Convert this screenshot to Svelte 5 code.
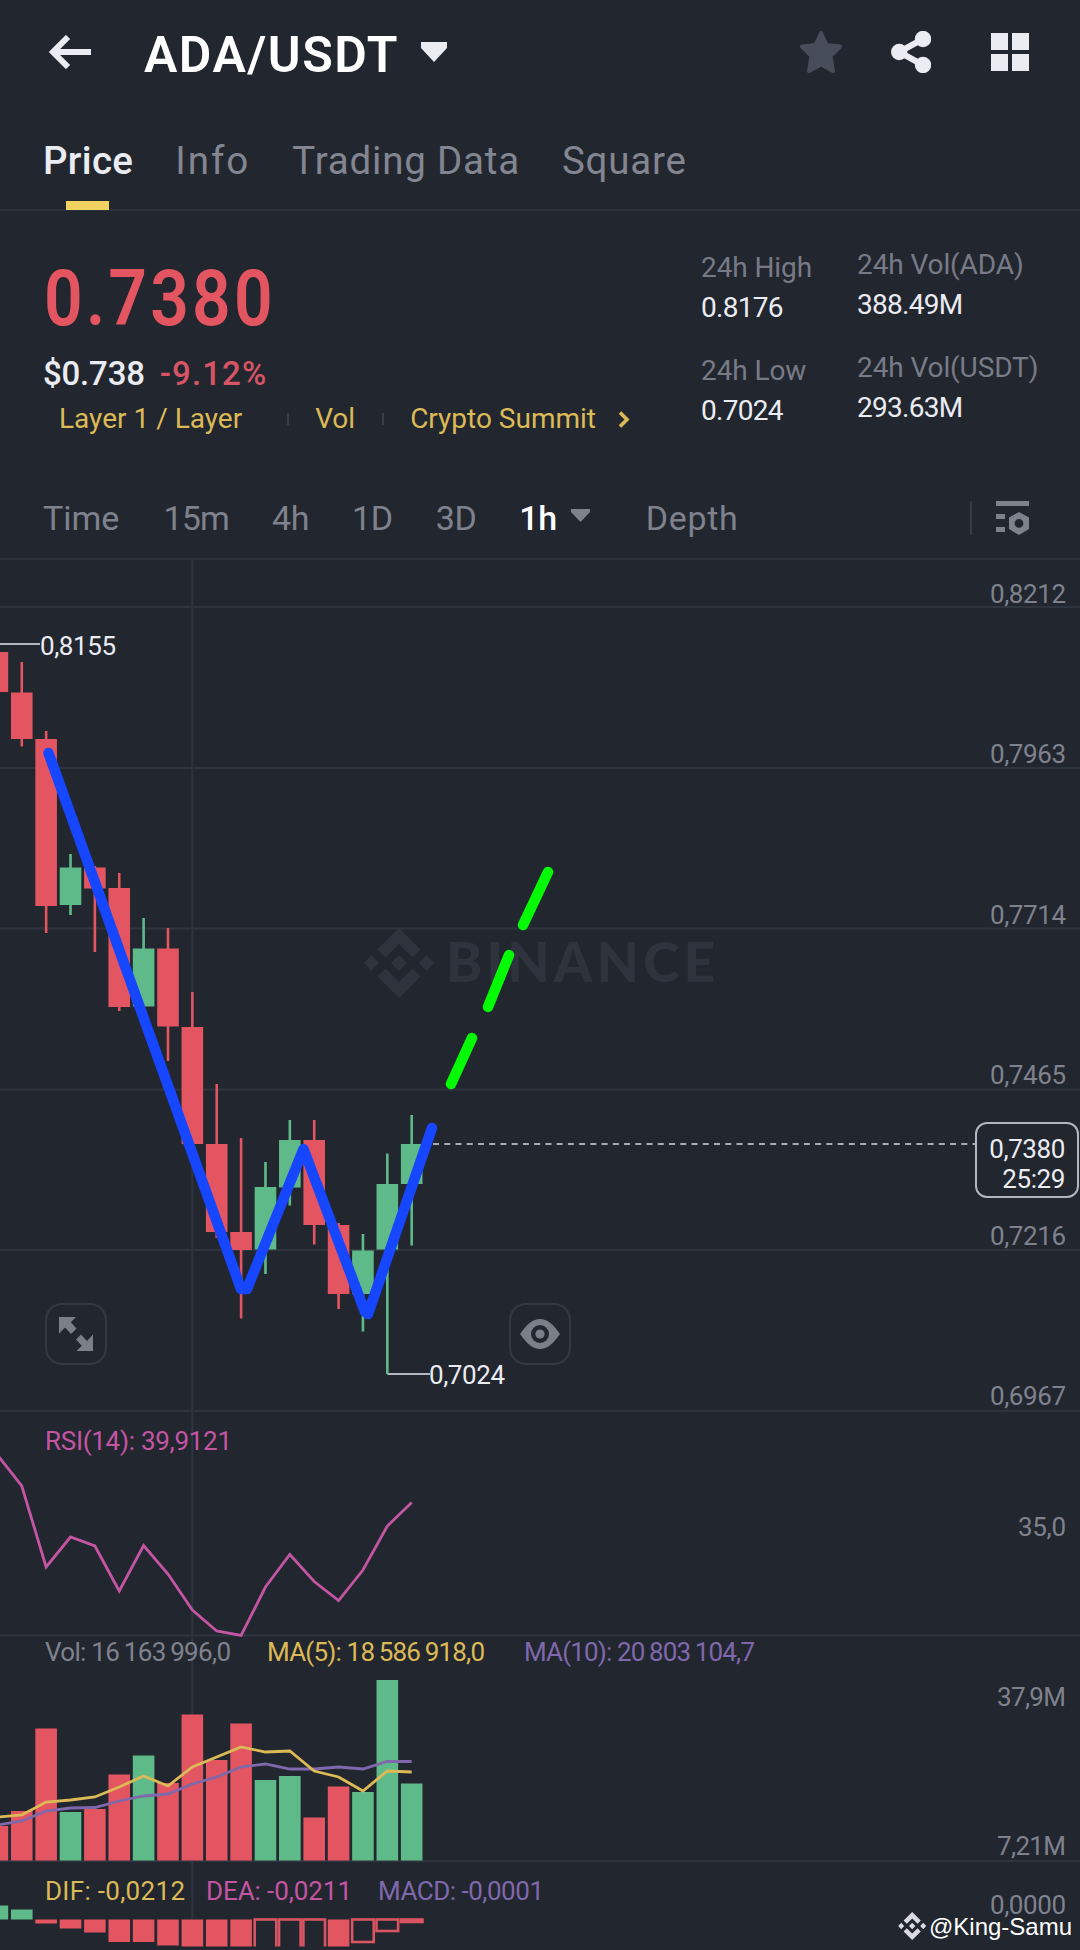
<script>
    const tabs = ["Price", "Info", "Trading Data", "Square"]
    const intervals = ["Time", "15m", "4h", "1D", "3D"]

    const step = 24.37
    const x = (i) => -2.6 + i * step

    // up?, high, body top, body bottom, low
    const candles = [
        [0, 652, 652, 692, 692],
        [0, 662, 692.5, 739, 746.5],
        [0, 731, 739, 906, 933],
        [1, 854, 867.5, 905, 915],
        [0, 866, 867.5, 888.5, 952],
        [0, 873, 888, 1007, 1011],
        [1, 918, 948.5, 1006.5, 1006.5],
        [0, 928, 948.5, 1026.5, 1061],
        [0, 992, 1027, 1144, 1144],
        [0, 1084, 1144, 1232, 1238],
        [0, 1138, 1232, 1250, 1318.5],
        [1, 1162, 1187, 1249.5, 1274],
        [1, 1120, 1140, 1187.5, 1205.5],
        [0, 1120, 1140, 1225, 1244.5],
        [0, 1223, 1225, 1294, 1309],
        [1, 1234, 1250.5, 1294, 1331.5],
        [1, 1153.5, 1184, 1249.5, 1374],
        [1, 1115, 1144, 1184, 1245.5]
    ]

    const volumes = [1826, 1811, 1728.5, 1812, 1809, 1774.5, 1755.5, 1783, 1714.5, 1760, 1723.5, 1780, 1776, 1817.5, 1786.5, 1792, 1680, 1783.5]
    const ma5 = [1817, 1815, 1802, 1800, 1797, 1787, 1776, 1786, 1767, 1757, 1747, 1752, 1751, 1771, 1777, 1791, 1771, 1772]
    const ma10 = [1825, 1821, 1811, 1808, 1807.5, 1801, 1796, 1794, 1784, 1777, 1767, 1764, 1769, 1769, 1767, 1769, 1761.5, 1761.5]
    const rsi = [1455, 1486, 1567, 1537, 1546, 1591, 1545.5, 1574, 1610, 1631, 1635.5, 1587, 1554.5, 1581.5, 1600.5, 1570, 1526, 1502.5]

    // top, bottom, style
    const macd = [
        [1905.5, 1919.5, "up"],
        [1909.5, 1919.5, "up"],
        [1919.5, 1923.5, "down"],
        [1919.5, 1928.5, "down"],
        [1919.5, 1932.5, "down"],
        [1919.5, 1942, "down"],
        [1919.5, 1942, "down"],
        [1919.5, 1945.5, "down"],
        [1919.5, 1947, "down"],
        [1919.5, 1947, "down"],
        [1919.5, 1947, "down"],
        [1919.5, 1955, "hollow"],
        [1919.5, 1955, "hollow"],
        [1919.5, 1955, "hollow"],
        [1919.5, 1947, "down"],
        [1919.5, 1942, "hollow"],
        [1919.5, 1931, "hollow"],
        [1919.5, 1922, "hollow"]
    ]

    const gridLines = [607, 768, 928.5, 1089.5, 1250, 1411, 1635.5, 1861]

    const axis = [
        ["0,8212", 602.5, 76],
        ["0,7963", 763, 76],
        ["0,7714", 923.5, 76],
        ["0,7465", 1083.5, 76],
        ["0,7216", 1244.5, 76],
        ["0,6967", 1405, 76],
        ["35,0", 1536, 48],
        ["37,9M", 1706, 69],
        ["7,21M", 1855, 69],
        ["0,0000", 1914, 76]
    ]

    const legend = [
        ["RSI(14): 39,9121", 45, 1450, 187, "pink"],
        ["Vol: 16\u2009163\u2009996,0", 45, 1661, 186, "grey"],
        ["MA(5): 18\u2009586\u2009918,0", 267, 1661, 218, "yellow"],
        ["MA(10): 20\u2009803\u2009104,7", 524, 1661, 231, "purple"],
        ["DIF: -0,0212", 45, 1899.5, 140, "yellow"],
        ["DEA: -0,0211", 206, 1899.5, 146, "pink"],
        ["MACD: -0,0001", 378, 1899.5, 166, "purple"]
    ]

    const line = (ys) => ys.map((y, i) => x(i) + "," + y).join(" ")
</script>

{#snippet logo()}
    <path d="M0 -35 L21.5 -13.5 L13.5 -5.5 L0 -19 L-13.5 -5.5 L-21.5 -13.5 Z" />
    <path d="M0 35 L21.5 13.5 L13.5 5.5 L0 19 L-13.5 5.5 L-21.5 13.5 Z" />
    <path d="M0 -8 L8 0 L0 8 L-8 0 Z M-27.5 -8 L-20 0 L-27.5 8 L-35 0 Z M27.5 -8 L35 0 L27.5 8 L20 0 Z" />
{/snippet}

<main>
    <header>
        <svg class="back" width="42" height="34" viewBox="0 0 42 34">
            <path d="M42 17 H5 M19 2 L4 17 L19 32" />
        </svg>
        <h1>ADA/USDT</h1>
        <svg class="caret" width="26" height="20" viewBox="0 0 26 20">
            <path d="M0 0 H26 V6 L13 20 L0 6 Z" />
        </svg>
        <div class="actions">
            <svg width="42" height="42" viewBox="0 0 42 42">
                <path class="star" d="M21 2 L26.5 14 L40 15.5 L30.5 25 L33 40 L21 33.5 L9 40 L11.5 25 L2 15.5 L15.5 14 Z" />
            </svg>
            <svg width="40" height="42" viewBox="0 0 40 42">
                <path class="link" d="M32 8 L8 21 L32 34" />
                <circle cx="32" cy="8" r="8.2" />
                <circle cx="8.2" cy="21" r="8.2" />
                <circle cx="32" cy="34" r="8.2" />
            </svg>
            <svg width="38" height="38" viewBox="0 0 38 38">
                <path d="M0 0 H17 V17 H0 Z M21 0 H38 V17 H21 Z M0 21 H17 V38 H0 Z M21 21 H38 V38 H21 Z" />
            </svg>
        </div>
    </header>

    <nav>
        {#each tabs as tab, i}
            <span class="tab" class:active={i === 0}>{tab}</span>
        {/each}
    </nav>

    <section class="summary">
        <div class="quote">
            <div class="last">0.7380</div>
            <div class="fiat"><b>$0.738</b><span>-9.12%</span></div>
            <div class="tags">
                <span class="layer">Layer 1 / Layer</span>
                <i></i>
                <span class="vol">Vol</span>
                <i></i>
                <span class="summit">Crypto Summit</span>
                <svg width="12" height="17" viewBox="0 0 12 17"><path d="M2 1.5 L9 8.5 L2 15.5" /></svg>
            </div>
        </div>
        <dl class="prices">
            <dt>24h High</dt>
            <dd>0.8176</dd>
            <dt>24h Low</dt>
            <dd>0.7024</dd>
        </dl>
        <dl class="volumes">
            <dt>24h Vol(ADA)</dt>
            <dd>388.49M</dd>
            <dt>24h Vol(USDT)</dt>
            <dd>293.63M</dd>
        </dl>
    </section>

    <div class="intervals">
        {#each intervals as interval}
            <span>{interval}</span>
        {/each}
        <span class="selected">1h</span>
        <svg class="drop" width="19" height="13" viewBox="0 0 19 13"><path d="M0 0 H19 V3 L9.5 13 L0 3 Z" /></svg>
        <span class="depth">Depth</span>
        <svg class="settings" width="34" height="34" viewBox="0 0 34 34">
            <path d="M0 0 H33 V5 H0 Z M0 13 H9 V18 H0 Z M0 26 H9 V31 H0 Z" />
            <path fill-rule="evenodd" d="M23 11 L33 16.5 V28 L23 34 L13 28 V16.5 Z M23 18 A4.4 4.4 0 1 0 23 26.8 A4.4 4.4 0 1 0 23 18 Z" />
        </svg>
    </div>

    <section class="chart">
        <svg class="plot" width="1080" height="1390" viewBox="0 560 1080 1390">
            <g class="grid">
                {#each gridLines as y}
                    <line x1="0" y1={y} x2="1080" y2={y} />
                {/each}
                <line x1="192.3" y1="560" x2="192.3" y2="1919" />
            </g>

            <g class="watermark">
                <g transform="translate(399 963)">{@render logo()}</g>
                <text x="446" y="982" textLength="269">BINANCE</text>
            </g>

            {#each candles as [up, high, top, bottom, low], i}
                <g class={up ? "up" : "down"}>
                    <rect x={x(i) - 1.3} y={high} width="2.6" height={low - high} />
                    <rect x={x(i) - 10.8} y={top} width="21.6" height={bottom - top} />
                </g>
            {/each}

            <path class="leader" d="M0 644 H40 M387.5 1374 H430" />
            <text class="mark" x="40" y="654.5" textLength="76">0,8155</text>
            <text class="mark" x="429" y="1384" textLength="76">0,7024</text>
            <line class="current" x1="433" y1="1144" x2="975" y2="1144" />

            <polyline class="trend" points="48.5,753 241,1289 247,1289 303.5,1149 365,1312 368,1314 432,1128" />
            <path class="forecast" d="M451 1084 L472 1038 M488 1007 L509 955 M523 925 L548 872" />

            <polyline class="line pink" points={line(rsi)} />

            {#each volumes as top, i}
                <rect class={candles[i][0] ? "up" : "down"} x={x(i) - 10.8} y={top} width="21.6" height={1860.5 - top} />
            {/each}
            <polyline class="line purple" points={line(ma10)} />
            <polyline class="line yellow" points={line(ma5)} />

            <clipPath id="macd-area"><rect x="0" y="1862" width="1080" height="84.5" /></clipPath>
            <g clip-path="url(#macd-area)">
                {#each macd as [top, bottom, kind], i}
                    <rect class={kind} x={x(i) - 10.8} y={top} width="21.6" height={bottom - top} />
                {/each}
            </g>

            {#each axis as [label, y, width]}
                <text class="axis" x={1066 - width} {y} textLength={width}>{label}</text>
            {/each}
            {#each legend as [label, left, y, width, color]}
                <text class="legend {color}" x={left} {y} textLength={width}>{label}</text>
            {/each}

            <g class="author">
                <g transform="translate(912.2 1926) scale(0.4)">{@render logo()}</g>
                <text x="929" y="1935" textLength="143">@King-Samu</text>
            </g>
        </svg>

        <div class="price-tag"><span>0,7380</span><span class="timer">25:29</span></div>

        <button class="expand" aria-label="Expand">
            <svg width="36" height="36" viewBox="0 0 36 36">
                <path d="M1 1 H18 L12.8 6.2 L18.5 12.5 L13 18 L7 11.5 L1 17.5 Z" />
                <path d="M35 35 H18.5 L23.8 29.8 L18 23.5 L23 18.5 L29 25 L35 18.5 Z" />
            </svg>
        </button>
        <button class="eye" aria-label="Show orders">
            <svg width="40" height="32" viewBox="0 0 40 32">
                <path d="M0 16 C7 6 13 1 20 1 S33 6 40 16 C33 26 27 31 20 31 S7 26 0 16 Z" />
                <circle class="iris" cx="20" cy="16" r="9" />
                <circle cx="20" cy="16" r="4.6" />
            </svg>
        </button>
    </section>
</main>

<style>
    :global(body) {
        background: #22262f;
    }

    main {
        width: 1080px;
        height: 1950px;
        overflow: hidden;
        background: #22262f;
        color: #ebecf2;
        font-family: Roboto, "Noto Sans", sans-serif;
    }

    svg {
        display: block;
        flex: none;
    }

    header {
        display: flex;
        align-items: center;
        height: 104px;
        padding: 0 51px 0 49px;
        box-sizing: border-box;
        fill: #ebecf2;
    }

    .back {
        fill: none;
        stroke: #ebecf2;
        stroke-width: 6;
    }

    h1 {
        margin: 6px 0 0 53px;
        font-size: 50px;
        line-height: 60px;
        font-weight: 600;
        letter-spacing: 1.5px;
        color: #fff;
    }

    .caret {
        margin-left: 22px;
    }

    .actions {
        display: flex;
        align-items: center;
        margin-left: auto;
    }

    .actions svg:nth-child(2) {
        margin: 0 60px 0 49px;
    }

    .star {
        fill: #474d59;
        stroke: #474d59;
        stroke-width: 4;
        stroke-linejoin: round;
    }

    .link {
        fill: none;
        stroke: #ebecf2;
        stroke-width: 6;
    }

    nav {
        display: flex;
        gap: 42px;
        height: 107px;
        padding: 35px 43px 0;
        box-sizing: border-box;
        border-bottom: 2px solid #2b313b;
    }

    .tab {
        position: relative;
        height: 70px;
        font-size: 38.5px;
        line-height: 44px;
        letter-spacing: 0.8px;
        color: #838691;
    }

    .tab:nth-child(2) {
        letter-spacing: 2px;
    }

    .tab.active {
        color: #ebecf2;
        font-weight: 500;
        letter-spacing: 0.3px;
    }

    .active::after {
        content: "";
        position: absolute;
        left: 23px;
        bottom: -1px;
        width: 43px;
        height: 9px;
        background: #f2d362;
    }

    .summary {
        display: flex;
        height: 266px;
        box-sizing: border-box;
    }

    .quote {
        width: 658px;
        padding: 43px 0 0 43px;
    }

    .last {
        width: 300px;
        margin-left: 1px;
        font-size: 77px;
        line-height: 90px;
        font-weight: 600;
        letter-spacing: 3.6px;
        color: #e35561;
        transform: scaleX(0.88);
        transform-origin: left;
    }

    .fiat {
        display: flex;
        gap: 15px;
        margin-top: 10px;
        font-size: 33px;
        line-height: 40px;
        letter-spacing: 1.1px;
        color: #d75464;
    }

    .fiat span {
        font-weight: 500;
    }

    .fiat b {
        font-weight: 500;
        letter-spacing: -0.2px;
        color: #ebecf2;
    }

    .tags {
        display: flex;
        align-items: center;
        margin: 8px 0 0 16px;
        font-size: 28px;
        line-height: 34px;
        color: #dcba55;
        white-space: nowrap;
    }

    .tags i {
        width: 2px;
        height: 12px;
        background: #383d48;
        margin: 0 26px 0 27px;
    }

    .tags .layer {
        margin-right: 18px;
    }

    .tags svg {
        margin-left: 22px;
        fill: none;
        stroke: #dcba55;
        stroke-width: 3.6;
    }

    dl {
        margin: 37px 0 0;
        width: 156px;
        font-size: 28px;
        line-height: 40px;
        letter-spacing: -0.1px;
        white-space: nowrap;
    }

    .volumes {
        margin-top: 34px;
    }

    dt {
        color: #787b86;
    }

    dd {
        margin: 0 0 23px;
        letter-spacing: -0.7px;
    }

    .intervals {
        display: flex;
        align-items: center;
        height: 83px;
        padding: 0 50px 0 43px;
        box-sizing: border-box;
        border-bottom: 2px solid #2b313b;
        font-size: 34px;
        line-height: 40px;
        letter-spacing: -0.4px;
        color: #7f828d;
    }

    .intervals span {
        margin-right: 43px;
    }

    .intervals span:first-child {
        margin-right: 44px;
        letter-spacing: 0;
    }

    .intervals span:nth-child(2) {
        letter-spacing: -0.8px;
    }

    .intervals .selected {
        margin-right: 14px;
        color: #fff;
        font-weight: 500;
    }

    .intervals .depth {
        letter-spacing: 0.7px;
    }

    .drop {
        fill: #7f828d;
        margin: 0 56px 4px 0;
    }

    .settings {
        margin-left: auto;
        padding-left: 24px;
        border-left: 2px solid #343944;
        fill: #7f828d;
    }

    .chart {
        position: relative;
    }

    .grid line {
        stroke: #2f343e;
        stroke-width: 2;
    }

    .watermark {
        fill: #2e333d;
    }

    .watermark text {
        font-family: Lato, sans-serif;
        font-weight: 900;
    }

    .up {
        fill: #5fba89;
    }

    .down {
        fill: #e35561;
    }

    .hollow {
        fill: #22262f;
        stroke: #d95562;
        stroke-width: 2.6;
    }

    .leader {
        fill: none;
        stroke: #b3b5c0;
        stroke-width: 2;
    }

    .current {
        stroke: #a8abb5;
        stroke-width: 2;
        stroke-dasharray: 6 5.24;
    }

    .trend,
    .forecast {
        fill: none;
        stroke: #1746ff;
        stroke-width: 10.5;
        stroke-linecap: round;
        stroke-linejoin: round;
    }

    .forecast {
        stroke: #05fb05;
    }

    .plot text {
        font-size: 26px;
    }

    .plot .watermark text {
        font-size: 55px;
    }

    .mark {
        fill: #ebecf2;
    }

    .axis,
    .grey {
        fill: #7f828d;
    }

    .pink {
        fill: #c455a3;
        stroke: #c455a3;
    }

    .yellow {
        fill: #dcba55;
        stroke: #dcba55;
    }

    .purple {
        fill: #7f68ab;
        stroke: #7f68ab;
    }

    .line {
        fill: none;
        stroke-width: 2.8;
    }

    .legend {
        stroke: none;
    }

    .author {
        fill: #d9dae2;
    }

    .plot .author text {
        fill: #fff;
        font-family: "Liberation Sans", Arial, sans-serif;
        font-size: 24px;
    }

    .price-tag {
        position: absolute;
        left: 975px;
        top: 562px;
        width: 104px;
        height: 76px;
        box-sizing: border-box;
        display: flex;
        flex-direction: column;
        align-items: flex-end;
        padding: 10px 12px 0 0;
        border: 2px solid #b3b5c0;
        border-radius: 12px;
        background: #22262f;
        font-size: 26px;
        line-height: 30px;
        letter-spacing: -0.4px;
    }

    button {
        position: absolute;
        top: 743px;
        width: 62px;
        height: 62px;
        padding: 0;
        display: flex;
        align-items: center;
        justify-content: center;
        border: 2px solid #343944;
        border-radius: 17px;
        background: #22262f;
        fill: #7c7f8a;
    }

    .expand {
        left: 45px;
    }

    .eye {
        left: 509px;
    }

    .iris {
        fill: #22262f;
    }
</style>
